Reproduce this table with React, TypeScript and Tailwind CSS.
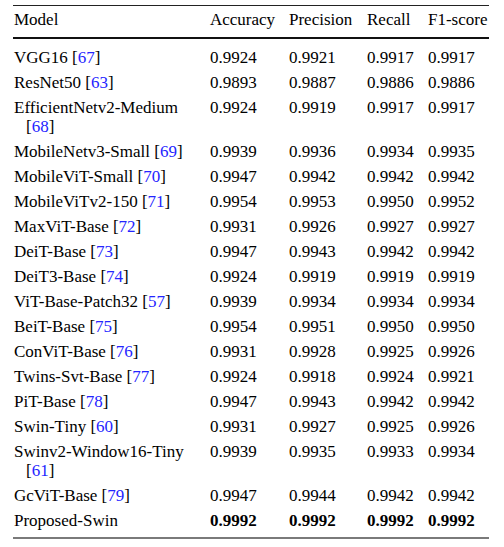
const rows = [
  { name: 'VGG16', ref: '67', v: ['0.9924', '0.9921', '0.9917', '0.9917'] },
  { name: 'ResNet50', ref: '63', v: ['0.9893', '0.9887', '0.9886', '0.9886'] },
  { name: 'EfficientNetv2-Medium', ref: '68', wrap: true, v: ['0.9924', '0.9919', '0.9917', '0.9917'] },
  { name: 'MobileNetv3-Small', ref: '69', v: ['0.9939', '0.9936', '0.9934', '0.9935'] },
  { name: 'MobileViT-Small', ref: '70', v: ['0.9947', '0.9942', '0.9942', '0.9942'] },
  { name: 'MobileViTv2-150', ref: '71', v: ['0.9954', '0.9953', '0.9950', '0.9952'] },
  { name: 'MaxViT-Base', ref: '72', v: ['0.9931', '0.9926', '0.9927', '0.9927'] },
  { name: 'DeiT-Base', ref: '73', v: ['0.9947', '0.9943', '0.9942', '0.9942'] },
  { name: 'DeiT3-Base', ref: '74', v: ['0.9924', '0.9919', '0.9919', '0.9919'] },
  { name: 'ViT-Base-Patch32', ref: '57', v: ['0.9939', '0.9934', '0.9934', '0.9934'] },
  { name: 'BeiT-Base', ref: '75', v: ['0.9954', '0.9951', '0.9950', '0.9950'] },
  { name: 'ConViT-Base', ref: '76', v: ['0.9931', '0.9928', '0.9925', '0.9926'] },
  { name: 'Twins-Svt-Base', ref: '77', v: ['0.9924', '0.9918', '0.9924', '0.9921'] },
  { name: 'PiT-Base', ref: '78', v: ['0.9947', '0.9943', '0.9942', '0.9942'] },
  { name: 'Swin-Tiny', ref: '60', v: ['0.9931', '0.9927', '0.9925', '0.9926'] },
  { name: 'Swinv2-Window16-Tiny', ref: '61', wrap: true, v: ['0.9939', '0.9935', '0.9933', '0.9934'] },
  { name: 'GcViT-Base', ref: '79', v: ['0.9947', '0.9944', '0.9942', '0.9942'] },
]

const cols = 'grid grid-cols-[197px_79px_78px_61px_61px]'

function Ref({ n }: { n: string }) {
  return (
    <span>
      [<span className="text-[#2424ff]">{n}</span>]
    </span>
  )
}

export default function App() {
  return (
    <div className="bg-white w-[504px] h-[547px] pt-[5px] pl-[13px] text-black text-[17px] leading-[19px] font-['Liberation_Serif','Times_New_Roman',serif]">
      <div className="w-[476px]">
        <div className={`${cols} border-t border-[#222] pt-[4px] pb-[8px] border-b-2 border-b-[#111]`}>
          <div className="pl-px">Model</div>
          <div>Accuracy</div>
          <div>Precision</div>
          <div>Recall</div>
          <div>F1-score</div>
        </div>

        <div className="pt-[6px] pb-[4px] border-b-2 border-[#7a7a7a]">
          {rows.map((r) => (
            <div key={r.name} className={`${cols} py-[3px]`}>
              <div className="pl-px">
                {r.wrap ? (
                  <>
                    <div>{r.name}</div>
                    <div className="pl-[12px]">
                      <Ref n={r.ref} />
                    </div>
                  </>
                ) : (
                  <>
                    {r.name} <Ref n={r.ref} />
                  </>
                )}
              </div>
              {r.v.map((x, i) => (
                <div key={i}>{x}</div>
              ))}
            </div>
          ))}
          <div className={`${cols} py-[3px]`}>
            <div className="pl-px">Proposed-Swin</div>
            <div className="font-bold">0.9992</div>
            <div className="font-bold">0.9992</div>
            <div className="font-bold">0.9992</div>
            <div className="font-bold">0.9992</div>
          </div>
        </div>
      </div>
    </div>
  )
}
